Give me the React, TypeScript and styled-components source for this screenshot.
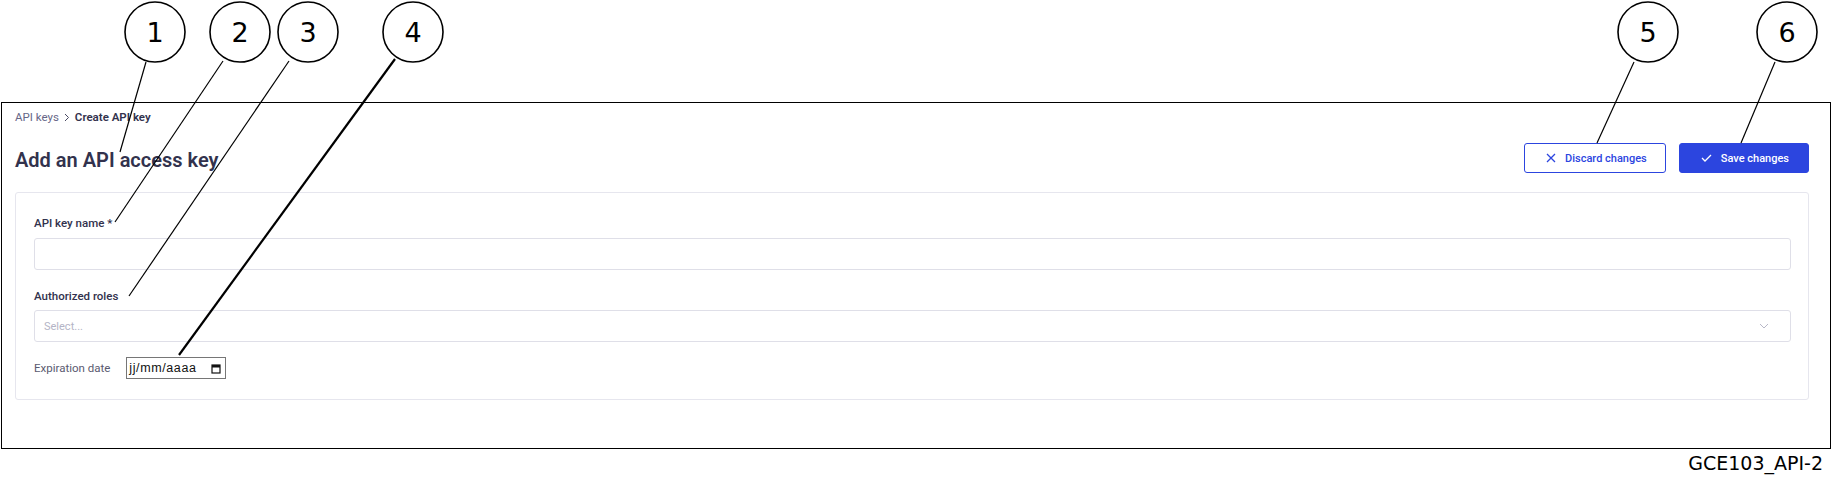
import styled, { createGlobalStyle } from "styled-components";

const GlobalStyle = createGlobalStyle`
  html, body {
    margin: 0;
    padding: 0;
    background: #ffffff;
  }
  body {
    font-family: Roboto, "Liberation Sans", sans-serif;
  }
`;

interface Callout {
  n: number;
  cx: number;
  x1: number;
  y1: number;
  x2: number;
  y2: number;
  bold?: boolean;
}

const callouts: Callout[] = [
  { n: 1, cx: 155, x1: 146, y1: 62, x2: 120, y2: 152 },
  { n: 2, cx: 240, x1: 223, y1: 61, x2: 115, y2: 222 },
  { n: 3, cx: 308, x1: 289, y1: 61, x2: 129, y2: 296 },
  { n: 4, cx: 413, x1: 395, y1: 59, x2: 179, y2: 355, bold: true },
  { n: 5, cx: 1648, x1: 1634, y1: 62, x2: 1597, y2: 143 },
  { n: 6, cx: 1787, x1: 1775, y1: 62, x2: 1741, y2: 143 },
];

const Page = styled.div`
  position: relative;
  width: 1832px;
  height: 479px;
  padding: 102px 0 0 1px;
  box-sizing: border-box;
  overflow: hidden;
`;

const Frame = styled.section`
  width: 1830px;
  height: 347px;
  box-sizing: border-box;
  border: 1px solid #000000;
  padding: 7px 21px 0 13px;
  display: flex;
  flex-direction: column;
`;

const Breadcrumb = styled.nav`
  display: flex;
  align-items: center;
  gap: 5px;
  height: 14px;
  font-size: 11.5px;
  color: #666687;
`;

const Crumb = styled.span<{ $current?: boolean }>`
  font-weight: ${(p) => (p.$current ? 600 : 400)};
  color: ${(p) => (p.$current ? "#32324d" : "#666687")};
`;

const HeaderRow = styled.div`
  display: flex;
  align-items: center;
  justify-content: space-between;
  margin-top: 19px;
  height: 30px;
`;

const Title = styled.h1`
  margin: 4px 0 0;
  font-size: 20px;
  line-height: 24px;
  font-weight: 600;
  color: #32324d;
`;

const Actions = styled.div`
  display: flex;
  gap: 13px;
`;

const Button = styled.button<{ $primary?: boolean }>`
  display: flex;
  align-items: center;
  gap: 9px;
  height: 30px;
  box-sizing: border-box;
  padding: ${(p) => (p.$primary ? "0 19px 0 21px" : "0 18px 0 21px")};
  border-radius: 3px;
  border: 1px solid #2c45df;
  background: ${(p) => (p.$primary ? "#2c45df" : "#ffffff")};
  color: ${(p) => (p.$primary ? "#ffffff" : "#2c45df")};
  font-family: Roboto, "Liberation Sans", sans-serif;
  font-size: 11px;
  font-weight: 500;
  cursor: pointer;
`;

const Card = styled.div`
  margin-top: 19px;
  width: 1794px;
  box-sizing: border-box;
  border: 1px solid #e6e6ee;
  border-radius: 3px;
  padding: 23px 17px 20px 18px;
  display: flex;
  flex-direction: column;
`;

const Label = styled.label<{ $muted?: boolean }>`
  display: block;
  height: 14px;
  line-height: 14px;
  font-size: 11.5px;
  font-weight: ${(p) => (p.$muted ? 400 : 500)};
  color: ${(p) => (p.$muted ? "#5a5a70" : "#32324d")};
`;

const TextField = styled.input`
  display: block;
  margin-top: 8px;
  height: 32px;
  width: 100%;
  box-sizing: border-box;
  border: 1px solid #dfdfe8;
  border-radius: 3px;
  padding: 0 9px;
  font-family: inherit;
  font-size: 11px;
  outline: none;
`;

const Select = styled.div`
  margin-top: 7px;
  height: 32px;
  box-sizing: border-box;
  border: 1px solid #dfdfe8;
  border-radius: 3px;
  padding: 0 21px 0 9px;
  display: flex;
  align-items: center;
  justify-content: space-between;
  font-size: 11px;
  color: #b4b4c6;
`;

const FieldGap = styled.div<{ $h: number }>`
  height: ${(p) => p.$h}px;
`;

const DateRow = styled.div`
  margin-top: 15px;
  display: flex;
  align-items: center;
  gap: 16px;
  height: 22px;
`;

const DateBox = styled.div`
  width: 100px;
  height: 22px;
  box-sizing: border-box;
  border: 1px solid #767676;
  display: flex;
  align-items: center;
  justify-content: space-between;
  padding: 0 4px 0 2px;
  font-family: "Liberation Sans", Arial, sans-serif;
  font-size: 12.5px;
  letter-spacing: 0.6px;
  color: #111111;
`;

const Caption = styled.div`
  margin-top: 3px;
  padding-right: 9px;
  text-align: right;
  font-family: "DejaVu Sans", sans-serif;
  font-size: 19px;
  line-height: 22px;
  color: #000000;
`;

const Overlay = styled.svg`
  position: absolute;
  left: 0;
  top: 0;
  pointer-events: none;
`;

const Chevron = () => (
  <svg width="10" height="6" viewBox="0 0 10 6" fill="none">
    <path d="M1 1l4 4 4-4" stroke="#b8b8c8" strokeWidth="1" />
  </svg>
);

const CrumbArrow = () => (
  <svg width="6" height="9" viewBox="0 0 6 9" fill="none">
    <path d="M1 1l3.5 3.5L1 8" stroke="#4a4a63" strokeWidth="1" />
  </svg>
);

const CrossIcon = () => (
  <svg width="10" height="10" viewBox="0 0 10 10" fill="none">
    <path d="M1 1l8 8M9 1l-8 8" stroke="#2c45df" strokeWidth="1.3" />
  </svg>
);

const CheckIcon = () => (
  <svg width="11" height="8" viewBox="0 0 11 8" fill="none">
    <path d="M1 4l3 3 6-6" stroke="#ffffff" strokeWidth="1.3" />
  </svg>
);

const CalendarIcon = () => (
  <svg width="10" height="11" viewBox="0 0 10 11" fill="none">
    <rect x="1" y="2" width="8" height="8" stroke="#111" strokeWidth="1.2" />
    <rect x="1" y="2" width="8" height="2.5" fill="#111" />
  </svg>
);

export default function App() {
  return (
    <>
      <GlobalStyle />
      <Page>
        <Frame>
          <Breadcrumb>
            <Crumb>API keys</Crumb>
            <CrumbArrow />
            <Crumb $current>Create API key</Crumb>
          </Breadcrumb>
          <HeaderRow>
            <Title>Add an API access key</Title>
            <Actions>
              <Button>
                <CrossIcon />
                Discard changes
              </Button>
              <Button $primary>
                <CheckIcon />
                Save changes
              </Button>
            </Actions>
          </HeaderRow>
          <Card>
            <Label>API key name *</Label>
            <TextField />
            <FieldGap $h={19} />
            <Label>Authorized roles</Label>
            <Select>
              <span>Select...</span>
              <Chevron />
            </Select>
            <DateRow>
              <Label $muted>Expiration date</Label>
              <DateBox>
                <span>jj/mm/aaaa</span>
                <CalendarIcon />
              </DateBox>
            </DateRow>
          </Card>
        </Frame>
        <Caption>GCE103_API-2</Caption>
        <Overlay width="1832" height="479" viewBox="0 0 1832 479">
          {callouts.map((c) => (
            <g key={c.n}>
              <line
                x1={c.x1}
                y1={c.y1}
                x2={c.x2}
                y2={c.y2}
                stroke="#000"
                strokeWidth={c.bold ? 2.2 : 1.2}
              />
              <circle cx={c.cx} cy={32} r={30} fill="#fff" stroke="#000" strokeWidth="1.6" />
              <text
                x={c.cx}
                y={42}
                textAnchor="middle"
                fontFamily="'DejaVu Sans', sans-serif"
                fontSize="27"
                fill="#000"
              >
                {c.n}
              </text>
            </g>
          ))}
        </Overlay>
      </Page>
    </>
  );
}
